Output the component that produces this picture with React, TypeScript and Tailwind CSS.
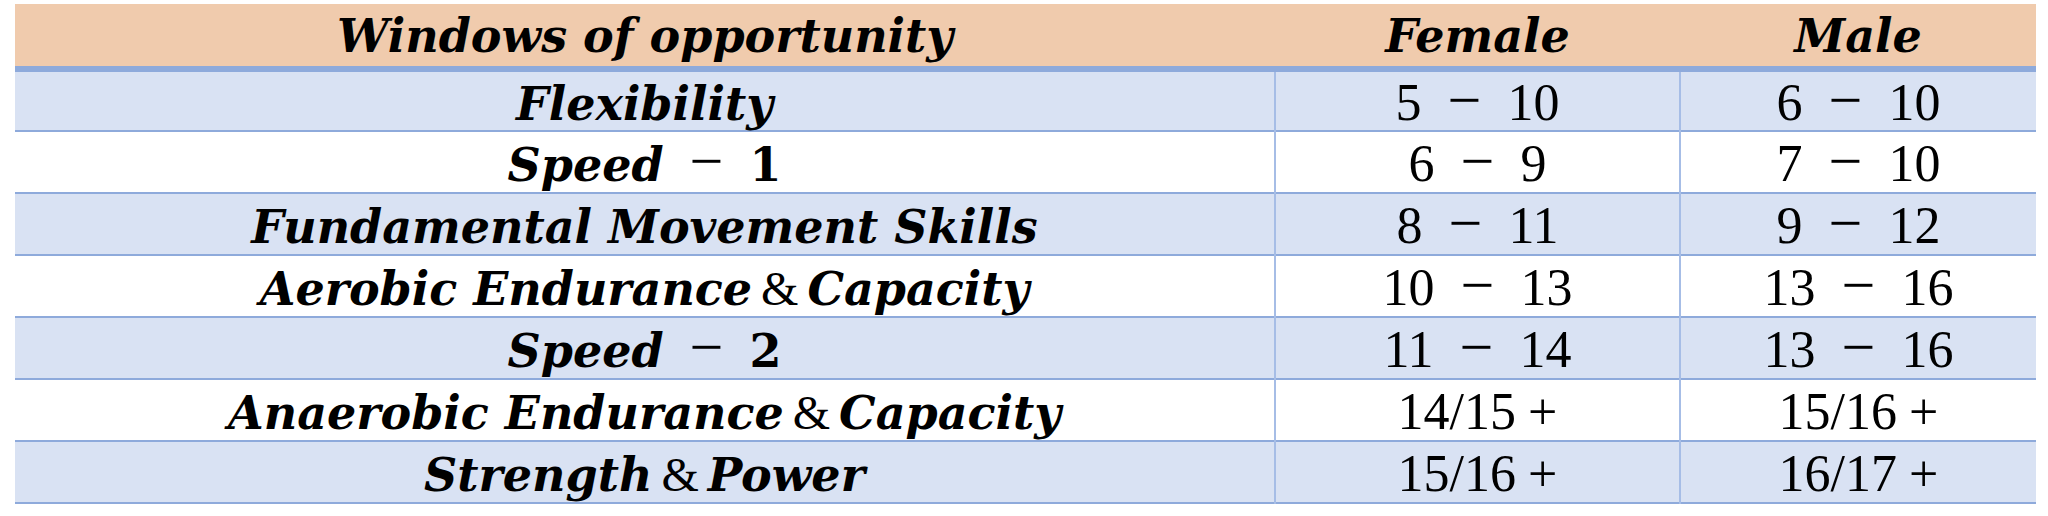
import type { ReactNode } from 'react';

const B = ({ children }: { children: ReactNode }) => (
  <span className="font-bold italic">{children}</span>
);

const Amp = () => (
  <span className="mx-[9px] text-[48px] leading-[0px] font-normal not-italic font-['Liberation_Serif',serif]">&amp;</span>
);

// math minus, drawn a bit larger than the surrounding text
const Minus = ({ gap }: { gap: string }) => (
  <span className={`${gap} text-[60px] leading-[0px] font-normal not-italic font-['Liberation_Serif',serif]`}>−</span>
);

const rows: { label: ReactNode; female: string; male: string }[] = [
  { label: <B>Flexibility</B>, female: '5 − 10', male: '6 − 10' },
  {
    label: (
      <>
        <B>Speed</B>
        <Minus gap="mx-[26px]" />
        <span className="font-bold not-italic">1</span>
      </>
    ),
    female: '6 − 9',
    male: '7 − 10',
  },
  { label: <B>Fundamental Movement Skills</B>, female: '8 − 11', male: '9 − 12' },
  {
    label: (
      <>
        <B>Aerobic Endurance</B>
        <Amp />
        <B>Capacity</B>
      </>
    ),
    female: '10 − 13',
    male: '13 − 16',
  },
  {
    label: (
      <>
        <B>Speed</B>
        <Minus gap="mx-[26px]" />
        <span className="font-bold not-italic">2</span>
      </>
    ),
    female: '11 − 14',
    male: '13 − 16',
  },
  {
    label: (
      <>
        <B>Anaerobic Endurance</B>
        <Amp />
        <B>Capacity</B>
      </>
    ),
    female: '14/15 +',
    male: '15/16 +',
  },
  {
    label: (
      <>
        <B>Strength</B>
        <Amp />
        <B>Power</B>
      </>
    ),
    female: '15/16 +',
    male: '16/17 +',
  },
];

// numbers like "5 − 10": wide gaps around the minus sign
function Range({ value }: { value: string }) {
  if (value.includes('−')) {
    const [a, b] = value.split(' − ');
    return (
      <>
        <span>{a}</span>
        <Minus gap="mx-[26px]" />
        <span>{b}</span>
      </>
    );
  }
  const [a, b] = value.split(' ');
  return (
    <>
      <span>{a}</span>
      <span className="ml-[12px]">{b}</span>
    </>
  );
}

export default function App() {
  return (
    <div className="bg-white w-[2048px] h-[516px] pt-[4px] pl-[15px] text-black font-['DejaVu_Serif',serif]">
      <table className="w-[2021px] border-collapse table-fixed">
        <colgroup>
          <col className="w-[1260px]" />
          <col className="w-[405px]" />
          <col className="w-[356px]" />
        </colgroup>
        <thead>
          <tr className="h-[65px] bg-[#f0cbad] border-b-[6px] border-[#8eaadb] text-[46px] font-bold italic">
            <th className="p-0 pt-[2px] leading-none align-middle">Windows of opportunity</th>
            <th className="p-0 pt-[2px] leading-none align-middle">Female</th>
            <th className="p-0 pt-[2px] leading-none align-middle">Male</th>
          </tr>
        </thead>
        <tbody>
          {rows.map((row, i) => (
            <tr
              key={i}
              className={`h-[62px] border-b-2 border-[#8eaadb] ${i % 2 === 0 ? 'bg-[#d9e2f3]' : 'bg-white'}`}
            >
              <td className="p-0 pt-[6px] text-center text-[46px] leading-none align-middle">{row.label}</td>
              <td className="p-0 pt-[4px] text-center text-[52px] leading-none align-middle border-l-2 border-[#a6bde6] font-['Liberation_Serif',serif]">
                <Range value={row.female} />
              </td>
              <td className="p-0 pt-[4px] text-center text-[52px] leading-none align-middle border-l-2 border-[#a6bde6] font-['Liberation_Serif',serif]">
                <Range value={row.male} />
              </td>
            </tr>
          ))}
        </tbody>
      </table>
    </div>
  );
}
